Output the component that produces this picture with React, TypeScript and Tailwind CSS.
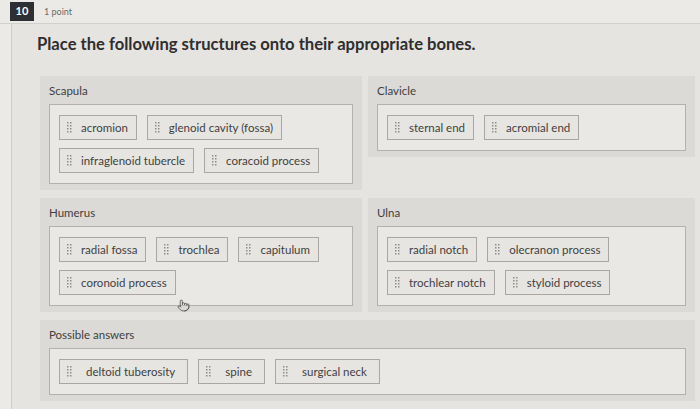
import { Pointer } from 'lucide-react'

type Group = {
  title: string
  items: string[]
}

const scapula: Group = {
  title: 'Scapula',
  items: ['acromion', 'glenoid cavity (fossa)', 'infraglenoid tubercle', 'coracoid process'],
}
const clavicle: Group = { title: 'Clavicle', items: ['sternal end', 'acromial end'] }
const humerus: Group = {
  title: 'Humerus',
  items: ['radial fossa', 'trochlea', 'capitulum', 'coronoid process'],
}
const ulna: Group = {
  title: 'Ulna',
  items: ['radial notch', 'olecranon process', 'trochlear notch', 'styloid process'],
}
const answers: Group = {
  title: 'Possible answers',
  items: ['deltoid tuberosity', 'spine', 'surgical neck'],
}

// row breaks inside each drop zone
const rows: Record<string, string[][]> = {
  Scapula: [
    ['acromion', 'glenoid cavity (fossa)'],
    ['infraglenoid tubercle', 'coracoid process'],
  ],
  Humerus: [['radial fossa', 'trochlea', 'capitulum'], ['coronoid process']],
  Ulna: [
    ['radial notch', 'olecranon process'],
    ['trochlear notch', 'styloid process'],
  ],
}

export default function App() {
  return (
    <div
      className="w-[700px] h-[409px] overflow-hidden bg-[#e6e4e0] text-[#3b3b3b] flex flex-col"
      style={{ fontFamily: 'Lato, "Open Sans", sans-serif' }}
    >
      <div className="h-[24px] shrink-0 flex items-center bg-[#ebeae6] border-b border-[#d2d0cc]">
        <div className="ml-[10px] h-[19px] w-[24px] bg-[#2c3034] text-white text-[11px] font-bold flex items-center justify-center">
          10
        </div>
        <span className="ml-[10px] text-[9px] text-[#6a6a6a]">1 point</span>
      </div>
      <div className="flex flex-1">
        <div className="w-[12px] border-r border-[#cfcdc9] bg-[#ebeae7]" />
        <div className="flex-1 pl-[25px] pr-[5px]">
          <h1 className="mt-[8px] text-[16.6px] font-bold text-[#2e2e2e]">
            Place the following structures onto their appropriate bones.
          </h1>
          <div className="relative mt-[19px] grid grid-cols-[322px_1fr] gap-x-[6px] gap-y-[8px] items-start pl-[3px]">
            <Panel group={scapula} />
            <Panel group={clavicle} />
            <Panel group={humerus} />
            <Panel group={ulna} />
            <div className="col-span-2">
              <Panel group={answers} />
            </div>
            <Pointer className="absolute left-[140px] top-[223px] w-[13px] h-[13px] text-[#555]" strokeWidth={1.6} />
          </div>
        </div>
      </div>
    </div>
  )
}

function Panel({ group }: { group: Group }) {
  const lines = rows[group.title] ?? [group.items]
  return (
    <div className="bg-[#dcdad6] px-[9px] pt-[8px] pb-[6px]">
      <p className="text-[11.5px] leading-[14px] mb-[6px] text-[#404040]">{group.title}</p>
      <div className="border border-[#b3b1ad] bg-[#eae8e4] px-[9px] py-[10px] flex flex-col gap-[8px]">
        {lines.map((line, i) => (
          <div key={i} className="flex gap-[10px]">
            {line.map((t) => (
              <Chip key={t} label={t} wide={group.title === 'Possible answers'} />
            ))}
          </div>
        ))}
      </div>
    </div>
  )
}

function Chip({ label, wide }: { label: string; wide?: boolean }) {
  return (
    <div
      className={`h-[25px] flex items-center border border-[#a9a7a3] bg-[#e7e5e1] pl-[7px] ${
        wide ? 'gap-[14px] pr-[12px]' : 'gap-[9px] pr-[8px]'
      }`}
    >
      <Grip />
      <span className="text-[11.5px] text-[#3f3f3f]">{label}</span>
    </div>
  )
}

function Grip() {
  return (
    <svg width="5" height="11" viewBox="0 0 5 11" className="shrink-0">
      {[0, 1, 2, 3].map((r) => (
        <g key={r} fill="#8f8d89">
          <rect x="0" y={r * 3} width="1.5" height="1.5" />
          <rect x="3" y={r * 3} width="1.5" height="1.5" />
        </g>
      ))}
    </svg>
  )
}
